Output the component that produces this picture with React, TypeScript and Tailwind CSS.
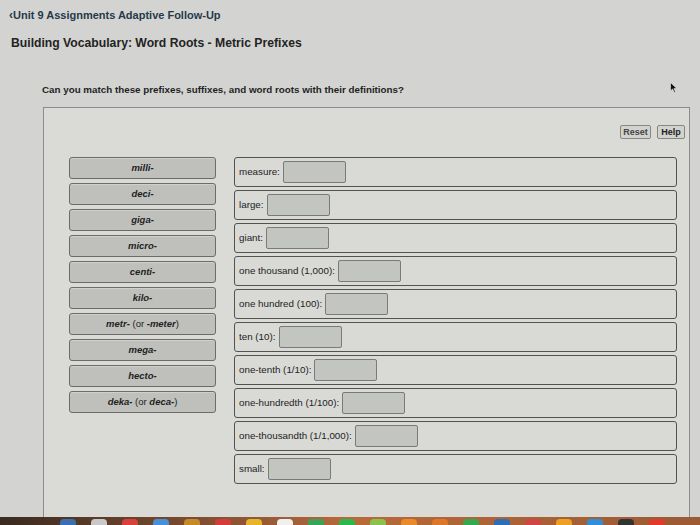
import React from "react";

type Def = { label: string };

const prefixes: React.ReactNode[] = [
  <i className="font-bold">milli-</i>,
  <i className="font-bold">deci-</i>,
  <i className="font-bold">giga-</i>,
  <i className="font-bold">micro-</i>,
  <i className="font-bold">centi-</i>,
  <i className="font-bold">kilo-</i>,
  <>
    <i className="font-bold">metr-</i> (or <i className="font-bold">-meter</i>)
  </>,
  <i className="font-bold">mega-</i>,
  <i className="font-bold">hecto-</i>,
  <>
    <i className="font-bold">deka-</i> (or <i className="font-bold">deca-</i>)
  </>,
];

const defs: Def[] = [
  { label: "measure:" },
  { label: "large:" },
  { label: "giant:" },
  { label: "one thousand (1,000):" },
  { label: "one hundred (100):" },
  { label: "ten (10):" },
  { label: "one-tenth (1/10):" },
  { label: "one-hundredth (1/100):" },
  { label: "one-thousandth (1/1,000):" },
  { label: "small:" },
];

const dock = [
  "#3b6fb0", "#c9c9c9", "#d8423a", "#4a90d9", "#c48a2c", "#d33c3c", "#e7b52c",
  "#f0f0f0", "#3aa35a", "#2db84d", "#8bc34a", "#e98b2a", "#e0762a", "#36a852",
  "#2f6db5", "#d04545", "#f0a020", "#2f8fd8", "#333333", "#e03a2f",
];

const PrefixTile = ({ children }: { children: React.ReactNode }) => (
  <div className="h-[22px] rounded-[3px] border border-[#6b6b69] bg-[#bfc0bc] flex items-center justify-center text-[9.5px] text-[#1e1e1e] shadow-[inset_0_1px_0_#d0d1cd]">
    <span>{children}</span>
  </div>
);

const DefRow = ({ def }: { def: Def }) => (
  <div className="h-[30px] rounded-[3px] border-[1.5px] border-[#525350] bg-[#d9dad6] flex items-center pl-[4px] gap-[3px] text-[9.8px] text-[#222]">
    <span>{def.label}</span>
    <div className="w-[63px] h-[22px] rounded-[2px] border border-[#7a7b78] bg-[#c3c5c1]" />
  </div>
);

export default function App() {
  return (
    <div className="w-[700px] h-[525px] relative overflow-hidden bg-[#d3d4d1] font-['Liberation_Sans',Arial,sans-serif] flex flex-col">
      <div className="pt-[9px] pl-[9px] text-[11px] leading-[12px] font-bold text-[#26394a]">
        <span className="text-[12px]">&lsaquo;</span>Unit 9 Assignments Adaptive Follow-Up
      </div>
      <div className="pt-[15px] pl-[11px] text-[12.2px] leading-[14px] font-bold text-[#232323]">
        Building Vocabulary: Word Roots - Metric Prefixes
      </div>
      <div className="pt-[34px] pl-[42px] text-[9.8px] leading-[11px] font-bold text-[#1f1f1f]">
        Can you match these prefixes, suffixes, and word roots with their definitions?
      </div>
      <div className="flex-1 mt-[12px] ml-[43px] mr-[10px] border-t border-l border-r border-[#8c8d8a] bg-[#dadbd7] flex flex-col">
        <div className="flex justify-end gap-[6px] pt-[17px] pr-[4px]">
          <button className="h-[14px] w-[31px] rounded-[2px] border border-[#858683] bg-[#d2d3cf] text-[9px] font-bold text-[#444] leading-none">
            Reset
          </button>
          <button className="h-[14px] w-[28px] rounded-[2px] border border-[#858683] bg-[#d2d3cf] text-[9px] font-bold text-[#222] leading-none">
            Help
          </button>
        </div>
        <div className="flex gap-[18px] pt-[18px] pl-[25px] pr-[12px]">
          <div className="w-[147px] flex flex-col gap-[4px] shrink-0">
            {prefixes.map((p, i) => (
              <PrefixTile key={i}>{p}</PrefixTile>
            ))}
          </div>
          <div className="flex-1 flex flex-col gap-[3px]">
            {defs.map((d) => (
              <DefRow key={d.label} def={d} />
            ))}
          </div>
        </div>
      </div>
      <div className="h-[8px] shrink-0 bg-gradient-to-r from-[#3a2a20] via-[#b86a3a] to-[#9a5a34] flex items-start gap-[15px] pl-[60px] overflow-hidden">
        {dock.map((c, i) => (
          <div key={i} className="w-[16px] h-[16px] mt-[2px] rounded-[4px] shrink-0" style={{ backgroundColor: c }} />
        ))}
      </div>
      <svg className="absolute left-[670px] top-[82px]" width="8" height="11" viewBox="0 0 8 11">
        <path d="M0.5 0.5 L0.5 9 L2.6 7 L4.2 10.4 L5.4 9.8 L3.9 6.6 L6.8 6.6 Z" fill="#111" stroke="#eee" strokeWidth="0.6" />
      </svg>
    </div>
  );
}
